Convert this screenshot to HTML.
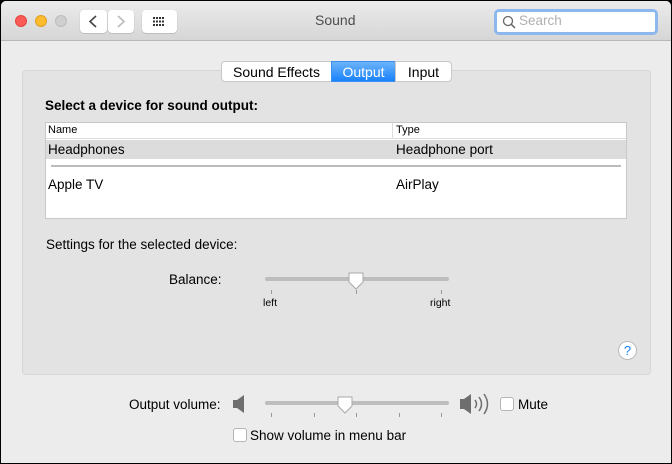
<!DOCTYPE html>
<html><head><style>
*{margin:0;padding:0;box-sizing:border-box}
body{width:672px;height:464px;background:#000;font-family:"Liberation Sans",sans-serif;position:relative;overflow:hidden}
.win{position:absolute;left:1px;top:1px;width:670px;height:462px;background:#ececec;border-radius:5px 5px 0 0;overflow:hidden}
.tb{position:absolute;left:0;top:0;width:670px;height:40px;background:linear-gradient(#ebebeb,#d6d6d6);border-bottom:1px solid #b8b8b8}
.dot{position:absolute;top:14px;width:12px;height:12px;border-radius:50%}
.btn{position:absolute;top:9px;height:23px;background:#fff;border-radius:4px;box-shadow:0 0.5px 1px rgba(0,0,0,.25)}
.a{position:absolute;white-space:nowrap}
.box{position:absolute;left:21px;top:69px;width:629px;height:305px;background:#e3e3e3;border:1px solid #d6d6d6;border-radius:4px}
.tab{position:absolute;top:60px;height:21px;font-size:14px;line-height:21px;text-align:center;background:#fff;border:1px solid #c8c8c8}
.cb{position:absolute;width:14px;height:14px;background:#fff;border:1px solid #b5b5b5;border-radius:3px}
.track{position:absolute;height:4px;background:#bdbdbd;border-radius:2px}
.tick{position:absolute;width:1px;height:4px;background:#999}
.t{font-size:13.5px}
</style></head><body>
<div class="win">
<div class="tb">
<div class="dot" style="left:14px;background:#fc5b57;border:1px solid #e2463f"></div>
<div class="dot" style="left:34px;background:#fdbc2e;border:1px solid #df9e23"></div>
<div class="dot" style="left:54px;background:#cfcfcf;border:1px solid #bcbcbc"></div>
<div class="btn" style="left:79px;width:27px"><svg width="27" height="23"><path d="M16 6L10 11.5L16 17" stroke="#444" stroke-width="1.6" fill="none"/></svg></div>
<div class="btn" style="left:107px;width:26px"><svg width="26" height="23"><path d="M10 6L16 11.5L10 17" stroke="#bbb" stroke-width="1.6" fill="none"/></svg></div>
<div class="btn" style="left:141px;width:35px"><svg width="35" height="23"><g fill="#333"><rect x="11" y="7" width="2" height="2"/><rect x="14" y="7" width="2" height="2"/><rect x="17" y="7" width="2" height="2"/><rect x="20" y="7" width="2" height="2"/><rect x="11" y="10.5" width="2" height="2"/><rect x="14" y="10.5" width="2" height="2"/><rect x="17" y="10.5" width="2" height="2"/><rect x="20" y="10.5" width="2" height="2"/><rect x="11" y="14" width="2" height="2"/><rect x="14" y="14" width="2" height="2"/><rect x="17" y="14" width="2" height="2"/><rect x="20" y="14" width="2" height="2"/></g></svg></div>
<div class="a" style="left:314px;top:11px;font-size:14px;color:#4d4d4d">Sound</div>
<div style="position:absolute;left:493px;top:8px;width:164px;height:26px;background:#fff;border:3px solid #8cb8ee;border-radius:5px"></div>
<svg class="a" style="left:500px;top:13px" width="16" height="16"><circle cx="7" cy="7" r="4.5" stroke="#666" stroke-width="1.3" fill="none"/><path d="M10.3 10.3L14 14" stroke="#666" stroke-width="1.5"/></svg>
<div class="a" style="left:518px;top:12px;font-size:13.5px;color:#b0b0b0">Search</div>
</div>
<div class="box"></div>
<div class="tab" style="left:220px;width:111px;border-radius:4px 0 0 4px">Sound Effects</div>
<div class="tab" style="left:330px;width:65px;background:linear-gradient(#6cb3fa,#1a82fb);color:#fff;border-color:#3b8ff0">Output</div>
<div class="tab" style="left:394px;width:57px;border-radius:0 4px 4px 0">Input</div>
<div class="a" style="left:44px;top:97px;font-size:13.5px;font-weight:bold">Select a device for sound output:</div>
<div style="position:absolute;left:44px;top:121px;width:582px;height:97px;background:#fff;border:1px solid #c8c8c8"></div>
<div style="position:absolute;left:45px;top:137px;width:580px;height:1px;background:#dcdcdc"></div>
<div style="position:absolute;left:391px;top:122px;width:1px;height:16px;background:#dcdcdc"></div>
<div class="a" style="left:47px;top:123px;font-size:11px">Name</div>
<div class="a" style="left:395px;top:123px;font-size:11px">Type</div>
<div style="position:absolute;left:45px;top:139px;width:580px;height:19px;background:#dcdcdc"></div>
<div class="a t" style="left:47px;top:141px">Headphones</div>
<div class="a t" style="left:395px;top:141px">Headphone port</div>
<div style="position:absolute;left:50px;top:164px;width:570px;height:2px;background:#bcbcbc"></div>
<div class="a t" style="left:47px;top:176px">Apple TV</div>
<div class="a t" style="left:395px;top:176px">AirPlay</div>
<div class="a t" style="left:45px;top:236px">Settings for the selected device:</div>
<div class="a t" style="left:168px;top:271px">Balance:</div>
<div class="track" style="left:264px;top:276px;width:184px"></div>
<svg class="a" style="left:346px;top:271px" width="18" height="20"><path d="M2 1H16V10L9 17L2 10Z" fill="#fff" stroke="#aaa"/></svg>
<div class="tick" style="left:270px;top:289px"></div><div class="tick" style="left:355px;top:289px"></div><div class="tick" style="left:440px;top:289px"></div>
<div class="a" style="left:262px;top:296px;font-size:10.5px">left</div>
<div class="a" style="left:429px;top:296px;font-size:10.5px">right</div>
<div style="position:absolute;left:617px;top:340px;width:19px;height:19px;border-radius:50%;background:#fff;border:1px solid #bbb;color:#1b7ff9;font-size:13px;text-align:center;line-height:17px">?</div>
<div class="a t" style="left:128px;top:396px">Output volume:</div>
<svg class="a" style="left:231px;top:393px" width="14" height="20"><path d="M1 6H5L12 1V19L5 14H1Z" fill="#6e6e6e"/></svg>
<div class="track" style="left:264px;top:400px;width:184px"></div>
<svg class="a" style="left:335px;top:395px" width="18" height="20"><path d="M2 1H16V10L9 17L2 10Z" fill="#fff" stroke="#aaa"/></svg>
<div class="tick" style="left:270px;top:412px"></div><div class="tick" style="left:313px;top:412px"></div><div class="tick" style="left:355px;top:412px"></div><div class="tick" style="left:398px;top:412px"></div><div class="tick" style="left:440px;top:412px"></div>
<svg class="a" style="left:458px;top:391px" width="34" height="24"><path d="M1 7H5L12 2V22L5 17H1Z" fill="#6e6e6e"/><path d="M16 8Q19 12 16 16M20 5Q25 12 20 19M25 2Q32 12 25 22" stroke="#6e6e6e" stroke-width="1.5" fill="none"/></svg>
<div class="cb" style="left:499px;top:396px"></div>
<div class="a t" style="left:517px;top:396px">Mute</div>
<div class="cb" style="left:232px;top:427px"></div>
<div class="a t" style="left:249px;top:427px">Show volume in menu bar</div>
</div>
</body></html>
